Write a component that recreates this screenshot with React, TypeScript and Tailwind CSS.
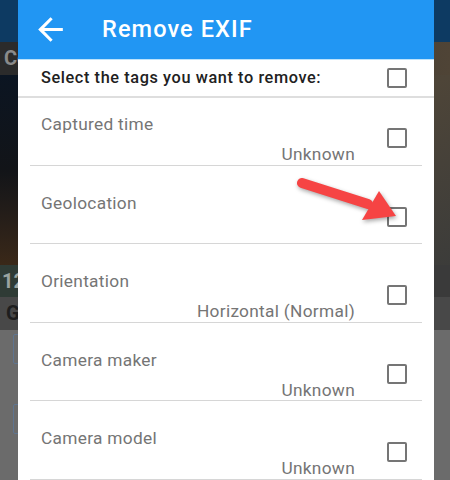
import React from "react";

type Tag = { label: string; value?: string };

const tags: Tag[] = [
  { label: "Captured time", value: "Unknown" },
  { label: "Geolocation" },
  { label: "Orientation", value: "Horizontal (Normal)" },
  { label: "Camera maker", value: "Unknown" },
  { label: "Camera model", value: "Unknown" },
];

function Box() {
  return <div className="w-5 h-5 border-2 border-[#757575] rounded-[2px] shrink-0" />;
}

function Backdrop() {
  return (
    <div className="flex flex-col w-full h-full font-['Roboto',sans-serif]">
      <div className="h-[42px] bg-[#0d3a62]" />
      <div className="h-[33px] flex">
        <div className="w-[60px] bg-[#2b2b2b] text-[#8a8a8a] font-bold text-[20px] leading-[33px] pl-[4px]">Co</div>
        <div className="flex-1 bg-gradient-to-r from-[#2b2b2b] to-[#4f4436]" />
      </div>
      <div className="h-[190px] flex">
        <div className="w-[60px] bg-gradient-to-b from-[#0b1522] via-[#121418] to-[#3a2818]" />
        <div className="flex-1 bg-gradient-to-br from-[#3d3428] via-[#4e4538] to-[#3c3c3a]" />
      </div>
      <div className="h-[32px] flex">
        <div className="w-[60px] bg-[#2f3b35] text-[#9aa3a0] font-bold text-[20px] leading-[32px] pl-[2px]">12</div>
        <div className="flex-1 bg-[#3a3a3a]" />
      </div>
      <div className="h-[33px] bg-[#484848] text-[#1e1e1e] font-bold text-[20px] leading-[33px] pl-[6px]">G</div>
      <div className="flex-1 bg-[#6b6b6b] pl-[13px] pt-[4px] flex flex-col gap-[40px]">
        <div className="w-8 h-[30px] border border-[#5f7590] rounded-[2px]" />
        <div className="w-8 h-[30px] border border-[#5f7590] rounded-[2px]" />
      </div>
    </div>
  );
}

export default function App() {
  return (
    <div className="relative w-[450px] h-[480px] overflow-hidden font-['Roboto',sans-serif]">
      <Backdrop />

      {/* dialog */}
      <div className="absolute left-[18px] top-0 w-[416px] h-[480px] bg-white flex flex-col overflow-hidden">
        <div className="h-[60px] bg-[#2196f3] flex items-center shrink-0 border-b border-[#bde3fb]">
          <svg viewBox="0 0 24 24" className="w-[37px] h-[37px] ml-[14px] fill-white">
            <path d="M20 11H7.83l5.59-5.59L12 4l-8 8 8 8 1.41-1.41L7.83 13H20v-2z" />
          </svg>
          <span className="ml-[33px] text-white text-[23.5px] font-medium tracking-[1.1px]">Remove EXIF</span>
        </div>

        <div className="h-[38px] flex items-center justify-between pl-[23px] pr-[27px] border-b-2 border-[#dedede] shrink-0 relative z-10 bg-white">
          <span className="text-[16.3px] font-medium text-[#212121] tracking-[0.6px]">Select the tags you want to remove:</span>
          <Box />
        </div>

        <div className="flex-1 overflow-hidden">
          <div className="-mt-[11px] mx-3">
            {tags.map((t) => (
              <div key={t.label} className="h-[78.5px] border-b border-[#d6d6d6] flex items-start pl-[11px] pr-[15px]">
                <div className="flex-1 flex flex-col pt-[27px]">
                  <span className="text-[17.3px] leading-[20px] text-[#757575] tracking-[0.3px]">{t.label}</span>
                  {t.value && (
                    <span className="mt-[10px] text-[17.3px] leading-[20px] text-[#757575] tracking-[0.3px] text-right pr-[32px]">{t.value}</span>
                  )}
                </div>
                <div className="pt-[41px]">
                  <Box />
                </div>
              </div>
            ))}
          </div>
        </div>
      </div>

      {/* red pointer arrow */}
      <svg className="absolute left-0 top-0 w-[450px] h-[480px] pointer-events-none drop-shadow-[1px_2px_2px_rgba(0,0,0,0.35)]" viewBox="0 0 450 480">
        <line x1="302" y1="183" x2="368" y2="204" stroke="#f64444" strokeWidth="10" strokeLinecap="round" />
        <polygon points="379,191 396,216 362,220" fill="#f64444" />
      </svg>
    </div>
  );
}
